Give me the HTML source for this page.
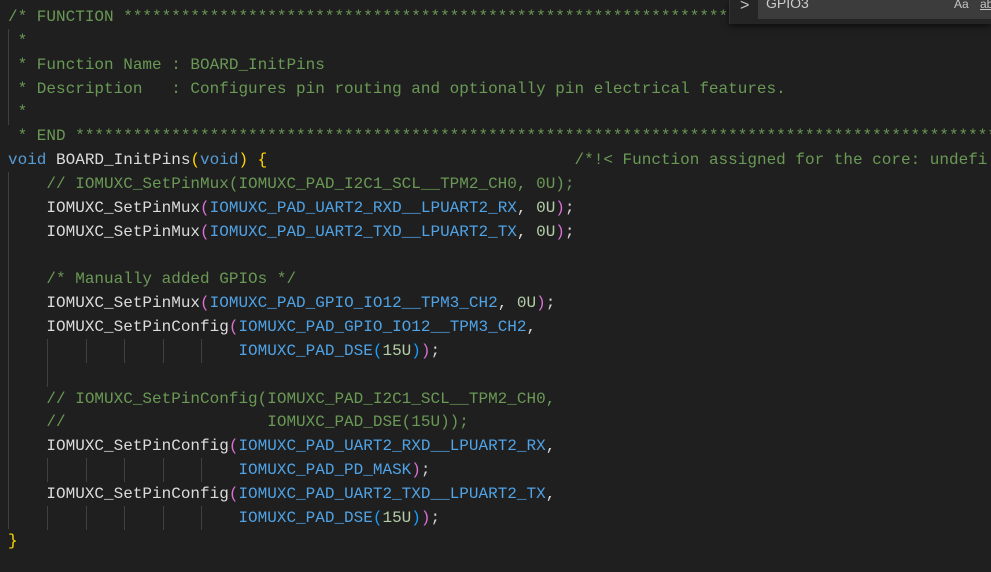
<!DOCTYPE html>
<html><head><meta charset="utf-8"><style>
html,body{margin:0;padding:0;background:#1f1f1f;width:991px;height:572px;overflow:hidden;position:relative;}
#w{position:absolute;left:0;top:1px;width:991px;height:571px;overflow:hidden;}
.l{position:absolute;left:8px;height:24px;line-height:24px;white-space:pre;font-family:"Liberation Mono",monospace;font-size:16px;color:#d4d4d4;}
.c{color:#6a9955}.k{color:#569cd6}.n{color:#4fa3e6}.f{color:#dcdcdc}.num{color:#b5cea8}
.y{color:#ffd700}.p{color:#da70d6}.b{color:#179fff}
.g{position:absolute;width:1px;background:#404040;}
#fw{position:absolute;left:729px;top:0;width:262px;height:24px;background:#252526;box-shadow:0 2px 6px rgba(0,0,0,.6);border-left:1px solid #333;box-sizing:border-box;overflow:hidden;}
#inp{position:absolute;left:28px;top:0;width:233px;height:19px;background:#3c3c3c;overflow:hidden;}
</style></head><body>
<div id="w">
<div class="g" style="left:8px;top:28px;height:96px"></div>
<div class="g" style="left:8px;top:171px;height:357px"></div>
<div class="g" style="left:47px;top:362px;height:24px"></div>
<div class="g" style="left:47px;top:338px;height:24px"></div><div class="g" style="left:86px;top:338px;height:24px"></div><div class="g" style="left:124px;top:338px;height:24px"></div><div class="g" style="left:163px;top:338px;height:24px"></div><div class="g" style="left:201px;top:338px;height:24px"></div>
<div class="g" style="left:47px;top:457px;height:24px"></div><div class="g" style="left:86px;top:457px;height:24px"></div><div class="g" style="left:124px;top:457px;height:24px"></div><div class="g" style="left:163px;top:457px;height:24px"></div><div class="g" style="left:201px;top:457px;height:24px"></div>
<div class="g" style="left:47px;top:505px;height:24px"></div><div class="g" style="left:86px;top:505px;height:24px"></div><div class="g" style="left:124px;top:505px;height:24px"></div><div class="g" style="left:163px;top:505px;height:24px"></div><div class="g" style="left:201px;top:505px;height:24px"></div>

<div class="l c" style="top:4px">/* FUNCTION **************************************************************************</div>
<div class="l c" style="top:28px"> *</div>
<div class="l c" style="top:52px"> * Function Name : BOARD_InitPins</div>
<div class="l c" style="top:76px"> * Description   : Configures pin routing and optionally pin electrical features.</div>
<div class="l c" style="top:99px"> *</div>
<div class="l c" style="top:123px"> * END ************************************************************************************************************</div>
<div class="l" style="top:147px"><span class="k">void</span> <span class="f">BOARD_InitPins</span><span class="y">(</span><span class="k">void</span><span class="y">)</span> <span class="y">{</span>                                <span class="c">/*!&lt; Function assigned for the core: undefi</span></div>
<div class="l c" style="top:171px">    // IOMUXC_SetPinMux(IOMUXC_PAD_I2C1_SCL__TPM2_CH0, 0U);</div>
<div class="l" style="top:195px">    <span class="f">IOMUXC_SetPinMux</span><span class="p">(</span><span class="n">IOMUXC_PAD_UART2_RXD__LPUART2_RX</span>, <span class="num">0U</span><span class="p">)</span>;</div>
<div class="l" style="top:219px">    <span class="f">IOMUXC_SetPinMux</span><span class="p">(</span><span class="n">IOMUXC_PAD_UART2_TXD__LPUART2_TX</span>, <span class="num">0U</span><span class="p">)</span>;</div>
<div class="l c" style="top:266px">    /* Manually added GPIOs */</div>
<div class="l" style="top:290px">    <span class="f">IOMUXC_SetPinMux</span><span class="p">(</span><span class="n">IOMUXC_PAD_GPIO_IO12__TPM3_CH2</span>, <span class="num">0U</span><span class="p">)</span>;</div>
<div class="l" style="top:314px">    <span class="f">IOMUXC_SetPinConfig</span><span class="p">(</span><span class="n">IOMUXC_PAD_GPIO_IO12__TPM3_CH2</span>,</div>
<div class="l" style="top:338px">                        <span class="n">IOMUXC_PAD_DSE</span><span class="b">(</span><span class="num">15U</span><span class="b">)</span><span class="p">)</span>;</div>
<div class="l c" style="top:386px">    // IOMUXC_SetPinConfig(IOMUXC_PAD_I2C1_SCL__TPM2_CH0,</div>
<div class="l c" style="top:409px">    //                     IOMUXC_PAD_DSE(15U));</div>
<div class="l" style="top:433px">    <span class="f">IOMUXC_SetPinConfig</span><span class="p">(</span><span class="n">IOMUXC_PAD_UART2_RXD__LPUART2_RX</span>,</div>
<div class="l" style="top:457px">                        <span class="n">IOMUXC_PAD_PD_MASK</span><span class="p">)</span>;</div>
<div class="l" style="top:481px">    <span class="f">IOMUXC_SetPinConfig</span><span class="p">(</span><span class="n">IOMUXC_PAD_UART2_TXD__LPUART2_TX</span>,</div>
<div class="l" style="top:505px">                        <span class="n">IOMUXC_PAD_DSE</span><span class="b">(</span><span class="num">15U</span><span class="b">)</span><span class="p">)</span>;</div>
<div class="l y" style="top:528px">}</div>
</div>
<div id="fw">
  <div style="position:absolute;left:10px;top:-4px;color:#c5c5c5;font-family:'Liberation Sans',sans-serif;font-size:16px;line-height:20px;">&gt;</div>
  <div id="inp">
    <div style="position:absolute;left:8px;top:-7px;color:#cccccc;font-family:'Liberation Sans',sans-serif;font-size:14px;line-height:20px;">GPIO3</div>
    <div style="position:absolute;left:196px;top:-6px;color:#c5c5c5;font-family:'Liberation Sans',sans-serif;font-size:12px;line-height:20px;">Aa</div>
    <div style="position:absolute;left:222px;top:-6px;color:#c5c5c5;font-family:'Liberation Sans',sans-serif;font-size:12px;line-height:20px;text-decoration:underline;">ab</div>
  </div>
</div>
</body></html>
